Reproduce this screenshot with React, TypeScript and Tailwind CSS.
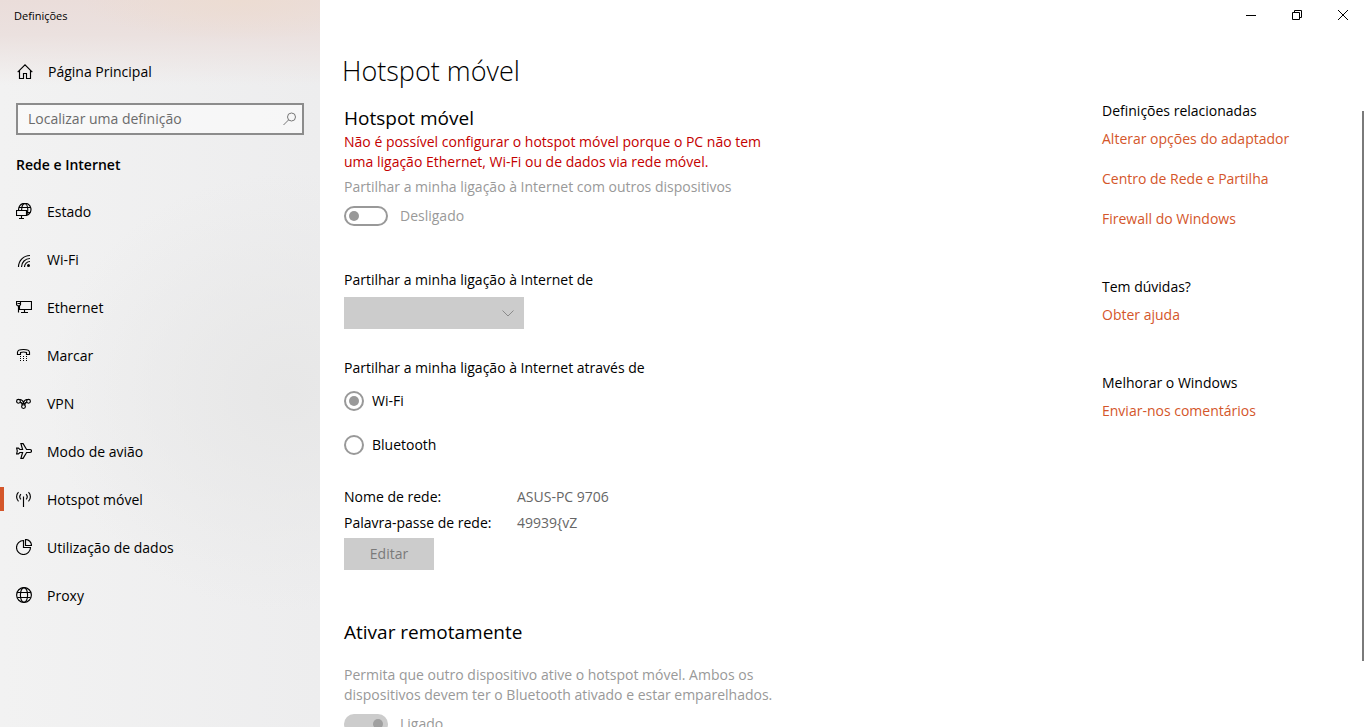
import { useState } from 'react';
import type { ReactNode } from 'react';

function Icon({ children }: { children: ReactNode }) {
  return (
    <svg
      viewBox="0 0 16 16"
      className="size-4 shrink-0"
      fill="none"
      stroke="currentColor"
      strokeWidth="1.15"
      aria-hidden="true"
    >
      {children}
    </svg>
  );
}

const navItems = [
  {
    name: 'Estado',
    icon: (
      <Icon>
        <path d="M2.6 7A6.2 6.2 0 1 1 10.5 12.4" />
        <path d="M5.6 7C5.6 3.4 6.8.6 8.6.6s3.2 2.8 3.2 6.2c0 2-.4 3.7-1.2 5M3 4.5h11.6M10.5 9.5h4" />
        <path d="M.5 7.5h10v5H.5zM5.5 12.5v3M3 15.5h5" />
      </Icon>
    ),
  },
  {
    name: 'Wi-Fi',
    icon: (
      <Icon>
        <path d="M2.5 16C2.5 9.6 7.6 4.5 14 4.5M5.5 16c0-4.7 3.8-8.5 8.5-8.5M8.5 16c0-3 2.5-5.5 5.5-5.5" />
        <circle cx="12.5" cy="14.5" r="1.5" fill="currentColor" stroke="none" />
      </Icon>
    ),
  },
  {
    name: 'Ethernet',
    icon: (
      <Icon>
        <path d="M5 2.5h10.5v8h-12V7M.5 2.5H4.5v3.2L3.5 6.7H1.5L.5 5.7zM1.5 4.5H4M8.5 10.5v3M5 13.5h7M2.5 7v6.5" />
      </Icon>
    ),
  },
  {
    name: 'Marcar',
    icon: (
      <Icon>
        <path d="M1.5 7.5V5.3C1.5 3.4 4.4 2.5 7.5 2.5s6 .9 6 2.8v2.2h-3v-2c-1.8-.6-4.2-.6-6 0v2z" />
        <path d="M4 9.5h1m2 0h1m2 0h1M4 11.5h1m2 0h1m2 0h1M4 13.5h1m2 0h1m2 0h1" />
      </Icon>
    ),
  },
  {
    name: 'VPN',
    icon: (
      <Icon>
        <circle cx="2.5" cy="6.3" r="1.9" />
        <circle cx="12.5" cy="6.3" r="1.9" />
        <circle cx="7.5" cy="11.6" r="1.9" />
        <path d="M3.6 4.7c1.8-.4 2.4.4 3 1.2l2.6 4.3M4.1 7.6h1.2l1 2.2M11.4 4.7c-1.8-.4-2.4.4-3 1.2L5.8 10.2M10.9 7.6H9.7l-1 2.2" />
      </Icon>
    ),
  },
  {
    name: 'Modo de avião',
    icon: (
      <Icon>
        <path d="M.6 5.1h1.8l1.5 1.4h2.7L4.9.6h2.2l3.5 5.9h3.2c1.1 0 1.7.7 1.7 1.5s-.6 1.5-1.7 1.5h-3.2l-3.5 5.9H4.9l1.7-5.9H3.9l-1.5 1.4H.6L1.3 8z" />
      </Icon>
    ),
  },
  {
    name: 'Hotspot móvel',
    icon: (
      <Icon>
        <path d="M7.5 5.5V16M2.5 1.2a6.4 6.4 0 0 0 0 9.1M12.5 1.2a6.4 6.4 0 0 1 0 9.1M4.9 3.1a4 4 0 0 0 0 5.3M10.1 3.1a4 4 0 0 1 0 5.3" />
      </Icon>
    ),
  },
  {
    name: 'Utilização de dados',
    icon: (
      <Icon>
        <path d="M7.5 1.5a7 7 0 1 0 7 7h-7z" />
        <path d="M9.5.5a6 6 0 0 1 6 6h-6z" />
      </Icon>
    ),
  },
  {
    name: 'Proxy',
    icon: (
      <Icon>
        <circle cx="8" cy="8" r="7.4" />
        <ellipse cx="8" cy="8" rx="3.6" ry="7.4" />
        <path d="M1.3 5.5h13.4M1.3 10.5h13.4" />
      </Icon>
    ),
  },
];

const linkGroups = [
  {
    title: 'Definições relacionadas',
    links: ['Alterar opções do adaptador', 'Centro de Rede e Partilha', 'Firewall do Windows'],
  },
  { title: 'Tem dúvidas?', links: ['Obter ajuda'] },
  { title: 'Melhorar o Windows', links: ['Enviar-nos comentários'] },
];

function Sidebar() {
  const [active, setActive] = useState('Hotspot móvel');

  return (
    <aside className="w-80 shrink-0 bg-[radial-gradient(ellipse_160px_40px_at_240px_0px,#ecdcd2_0%,transparent_100%),linear-gradient(to_bottom,#eaddda_0px,#ebe1df_35px,#ecebea00_85px),radial-gradient(ellipse_240px_220px_at_90%_54%,#e7e7e7_0%,#e7e7e700_100%),linear-gradient(to_right,#f2f2f2,#ededee)]">
      <div className="flex h-8 items-center px-3.5 text-[11px]">Definições</div>

      <a href="#inicio" className="mt-4 flex h-12 items-center gap-[15px] pl-[17px]">
        <Icon>
          <path d="M.7 8.2 8 .9l7.3 7.3M2.5 6.5v8h4v-5h3v5h4v-8" />
        </Icon>
        Página Principal
      </a>

      <div className="relative mx-4 mt-[7px]">
        <input
          type="text"
          aria-label="Localizar uma definição"
          placeholder="Localizar uma definição"
          className="block h-8 w-full border-2 border-[#8c8c8c] bg-white/50 pr-8 pb-0.5 pl-2.5 placeholder-[#6b6b6b] outline-none"
        />
        <svg viewBox="0 0 16 16" className="absolute top-2 right-1.5 size-4" fill="none" stroke="#777" aria-hidden="true">
          <circle cx="9.5" cy="6" r="4" />
          <path d="M6.6 8.9 1.5 14" />
        </svg>
      </div>

      <h2 className="mt-5 px-4 font-semibold">Rede e Internet</h2>

      <nav className="mt-3">
        {navItems.map(item => (
          <a
            key={item.name}
            href="#rede"
            onClick={() => setActive(item.name)}
            className="relative flex h-12 items-center gap-[15px] px-4"
          >
            {active === item.name && <span className="absolute left-0 h-6 w-1 bg-[#d4562a]" />}
            {item.icon}
            <span className="pt-0.5">{item.name}</span>
          </a>
        ))}
      </nav>
    </aside>
  );
}

function WindowControls() {
  return (
    <div className="-mr-0.5 flex h-[30px] shrink-0 justify-end">
      <button aria-label="Minimizar" className="grid w-[46px] place-items-center">
        <svg viewBox="0 0 10 10" className="size-2.5" fill="none" stroke="#000" aria-hidden="true">
          <path d="M0 5.5h10" />
        </svg>
      </button>
      <button aria-label="Restaurar" className="grid w-[46px] place-items-center">
        <svg viewBox="0 0 10 10" className="size-2.5" fill="none" stroke="#000" aria-hidden="true">
          <path d="M.5 2.5h7v7h-7zM2.5 2.5v-2h7v7h-2" />
        </svg>
      </button>
      <button aria-label="Fechar" className="grid w-[46px] place-items-center">
        <svg viewBox="0 0 10 10" className="size-2.5" fill="none" stroke="#000" aria-hidden="true">
          <path d="m0 0 10 10M10 0 0 10" />
        </svg>
      </button>
    </div>
  );
}

function Radio({ label, checked }: { label: string; checked?: boolean }) {
  return (
    <label className="flex h-5 items-center gap-2">
      <input
        type="radio"
        name="partilha"
        defaultChecked={checked}
        className="grid size-5 appearance-none place-items-center rounded-full border-2 border-[#999] checked:before:size-2.5 checked:before:rounded-full checked:before:bg-[#999]"
      />
      {label}
    </label>
  );
}

function HotspotSettings() {
  return (
    <div className="flex-1 pl-6">
      <h2 className="text-[19px] leading-6">Hotspot móvel</h2>
      <p className="mt-0.5 max-w-[440px] text-[#c40000]">
        Não é possível configurar o hotspot móvel porque o PC não tem uma ligação Ethernet, Wi-Fi ou de dados via rede
        móvel.
      </p>
      <p className="mt-[5px] text-[#999]">Partilhar a minha ligação à Internet com outros dispositivos</p>
      <label className="mt-[9px] flex items-center gap-3 text-[#999]">
        <input
          type="checkbox"
          role="switch"
          disabled
          className="flex h-5 w-11 appearance-none items-center rounded-full border-2 border-[#999] px-[3px] before:size-2.5 before:rounded-full before:bg-[#999]"
        />
        Desligado
      </label>

      <label htmlFor="origem" className="mt-11 block">
        Partilhar a minha ligação à Internet de
      </label>
      <div className="relative mt-[7px] w-[180px]">
        <select id="origem" disabled className="block h-8 w-full appearance-none bg-[#ccc] opacity-100" />
        <svg viewBox="0 0 12 12" className="absolute top-2.5 right-2.5 size-3" fill="none" stroke="#8a8a8a" aria-hidden="true">
          <path d="m.5 3.5 5.5 5.5 5.5-5.5" />
        </svg>
      </div>

      <fieldset className="mt-[29px]">
        <legend>Partilhar a minha ligação à Internet através de</legend>
        <div className="mt-[13px] flex flex-col gap-6">
          <Radio label="Wi-Fi" checked />
          <Radio label="Bluetooth" />
        </div>
      </fieldset>

      <dl className="mt-8 grid grid-cols-[173px_1fr] gap-y-1.5">
        <dt>Nome de rede:</dt>
        <dd className="text-[#666]">ASUS-PC 9706</dd>
        <dt>Palavra-passe de rede:</dt>
        <dd className="text-[#666]">49939{'{'}vZ</dd>
      </dl>
      <button disabled className="mt-[5px] h-8 w-[90px] bg-[#ccc] text-[#7a7a7a]">
        Editar
      </button>

      <h2 className="mt-[50px] text-[19px] leading-6">Ativar remotamente</h2>
      <p className="mt-[21px] max-w-[440px] text-[#999]">
        Permita que outro dispositivo ative o hotspot móvel. Ambos os dispositivos devem ter o Bluetooth ativado e estar
        emparelhados.
      </p>
      <label className="mt-[9px] flex items-center gap-3 text-[#999]">
        <input
          type="checkbox"
          role="switch"
          disabled
          defaultChecked
          className="flex h-5 w-11 appearance-none items-center justify-end rounded-full bg-[#ccc] px-[5px] before:size-2.5 before:rounded-full before:bg-[#a0a0a0]"
        />
        Ligado
      </label>
    </div>
  );
}

export default function App() {
  return (
    <div className="flex h-screen overflow-hidden bg-white font-['Open_Sans','Noto_Sans',sans-serif] text-[14px] leading-5 text-black">
      <Sidebar />

      <main className="flex min-w-0 flex-1 flex-col overflow-hidden">
        <WindowControls />
        <h1 className="mt-[23px] pl-[22px] text-[27px] leading-9 font-light">Hotspot móvel</h1>

        <div className="flex min-h-0 flex-1">
          <div className="mt-[17px] flex min-w-0 flex-1 overflow-hidden">
            <HotspotSettings />
          </div>

          <aside className="mt-3 flex w-[260px] shrink-0 flex-col gap-12">
            {linkGroups.map(group => (
              <section key={group.title}>
                <h3>{group.title}</h3>
                <ul className="mt-2 flex flex-col gap-5">
                  {group.links.map(link => (
                    <li key={link}>
                      <a href="#ajuda" className="text-[#d4562a]">
                        {link}
                      </a>
                    </li>
                  ))}
                </ul>
              </section>
            ))}
          </aside>

          <div className="mt-[22px] mb-[66px] w-0.5 shrink-0 bg-[#7a7a7a]" />
        </div>
      </main>
    </div>
  );
}
